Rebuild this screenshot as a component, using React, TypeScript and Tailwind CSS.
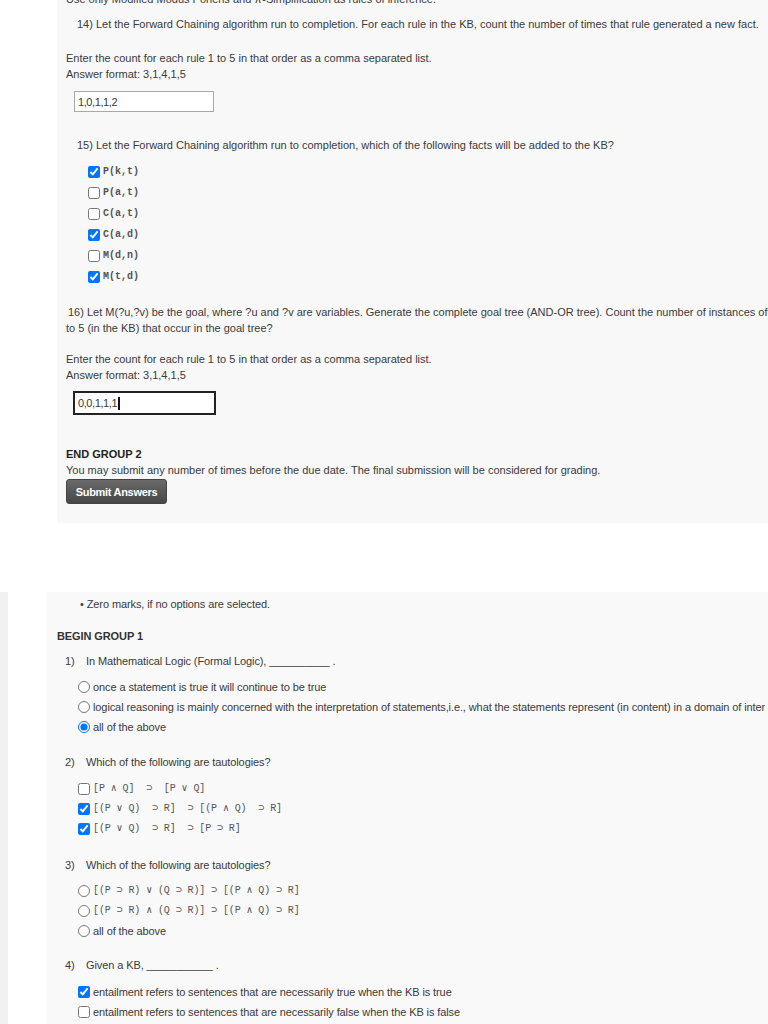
import React from "react";

const sans = "font-['Liberation_Sans',Arial,sans-serif]";
const mono = "font-['Liberation_Mono','Courier_New',monospace]";

function Box({ checked }: { checked?: boolean }) {
  return (
    <input
      type="checkbox"
      readOnly
      checked={!!checked}
      className="m-0 h-[12px] w-[12px] shrink-0"
    />
  );
}

function Radio({ checked }: { checked?: boolean }) {
  return (
    <input
      type="radio"
      readOnly
      checked={!!checked}
      className="m-0 h-[12px] w-[12px] shrink-0"
    />
  );
}

function AnswerBox({ value, focused }: { value: string; focused?: boolean }) {
  if (focused) {
    return (
      <div className="mt-[8px] ml-[7px] flex h-[24px] w-[143px] items-center border-2 border-[#222] bg-white pl-[3px] text-[11px] tracking-[-0.4px]">
        {value}
        <span className="ml-[1px] h-[13px] w-[2px] bg-[#111]" />
      </div>
    );
  }
  return (
    <div className="mt-[9px] ml-[8px] flex h-[21px] w-[140px] items-center border border-[#a9a9a9] bg-white pl-[3px] text-[11px] tracking-[-0.4px]">
      {value}
    </div>
  );
}

const facts = [
  { t: "P(k,t)", c: true },
  { t: "P(a,t)", c: false },
  { t: "C(a,t)", c: false },
  { t: "C(a,d)", c: true },
  { t: "M(d,n)", c: false },
  { t: "M(t,d)", c: true },
];

function TopPanel() {
  return (
    <div className="h-[592px] pl-[57px]">
      <div className="h-[523px] overflow-hidden bg-[#f8f8f8] pl-[9px] text-[11px] leading-4 text-[#3a3a3a]">
        <p className="-mt-[9px] whitespace-nowrap">
          Use only Modified Modus Ponens and ∧-Simplification as rules of inference.
        </p>
        <p className="mt-[9px] ml-[11px] whitespace-nowrap">
          14) Let the Forward Chaining algorithm run to completion. For each rule in the KB, count the number of times that rule generated a new fact.
        </p>
        <p className="mt-[18px]">Enter the count for each rule 1 to 5 in that order as a comma separated list.</p>
        <p>Answer format: 3,1,4,1,5</p>
        <AnswerBox value="1,0,1,1,2" />

        <p className="mt-[25px] ml-[11px] whitespace-nowrap">
          15) Let the Forward Chaining algorithm run to completion, which of the following facts will be added to the KB?
        </p>
        <div className="mt-[8px] ml-[22px]">
          {facts.map((f) => (
            <div key={f.t} className="flex h-[21px] items-center gap-[3px]">
              <Box checked={f.c} />
              <span className={`${mono} text-[10px] font-bold text-[#555]`}>{f.t}</span>
            </div>
          ))}
        </div>

        <p className="mt-[17px] ml-[2px] whitespace-nowrap">
          16) Let M(?u,?v) be the goal, where ?u and ?v are variables. Generate the complete goal tree (AND-OR tree). Count the number of instances of
        </p>
        <p>to 5 (in the KB) that occur in the goal tree?</p>
        <p className="mt-[15px]">Enter the count for each rule 1 to 5 in that order as a comma separated list.</p>
        <p>Answer format: 3,1,4,1,5</p>
        <AnswerBox value="0,0,1,1,1" focused />

        <p className="mt-[31px] font-bold text-[#222]">END GROUP 2</p>
        <p>You may submit any number of times before the due date. The final submission will be considered for grading.</p>
        <button className="mt-[1px] h-[25px] w-[101px] rounded-[3px] border border-[#444] bg-gradient-to-b from-[#6a6a6a] to-[#474747] text-[11px] font-bold tracking-[-0.3px] text-white">
          Submit Answers
        </button>
      </div>
    </div>
  );
}

function Question({ n, text, className }: { n: string; text: string; className?: string }) {
  return (
    <div className={`ml-[8px] flex whitespace-nowrap ${className ?? ""}`}>
      <span className="w-[21px]">{n}</span>
      <span>{text}</span>
    </div>
  );
}

function Option({ kind, checked, children, formula }: { kind: "radio" | "box"; checked?: boolean; children?: React.ReactNode; formula?: boolean }) {
  return (
    <div className="flex h-[20px] items-center gap-[3px] whitespace-nowrap">
      {kind === "radio" ? <Radio checked={checked} /> : <Box checked={checked} />}
      {formula ? (
        <span className={`${mono} whitespace-pre text-[10px] text-[#555]`}>{children}</span>
      ) : (
        <span>{children}</span>
      )}
    </div>
  );
}

function BottomPanel() {
  return (
    <div className="flex h-[432px]">
      <div className="w-[8px] bg-[#f1f1f1]" />
      <div className="w-[39px] bg-white" />
      <div className="flex-1 overflow-hidden bg-[#f9f9f9] pl-[10px] text-[11px] leading-4 tracking-[-0.1px] text-[#3a3a3a]">
        <p className="mt-[4px] ml-[23px] whitespace-nowrap">• Zero marks, if no options are selected.</p>
        <p className="mt-[16px] font-bold text-[#333]">BEGIN GROUP 1</p>

        <Question className="mt-[9px]" n="1)" text="In Mathematical Logic (Formal Logic), __________ ." />
        <div className="mt-[8px] ml-[21px]">
          <Option kind="radio">once a statement is true it will continue to be true</Option>
          <Option kind="radio">
            logical reasoning is mainly concerned with the interpretation of statements,i.e., what the statements represent (in content) in a domain of inter
          </Option>
          <Option kind="radio" checked>all of the above</Option>
        </div>

        <Question className="mt-[17px]" n="2)" text="Which of the following are tautologies?" />
        <div className="mt-[9px] ml-[21px]">
          <Option kind="box" formula>{"[P ∧ Q]  ⊃  [P ∨ Q]"}</Option>
          <Option kind="box" checked formula>{"[(P ∨ Q)  ⊃ R]  ⊃ [(P ∧ Q)  ⊃ R]"}</Option>
          <Option kind="box" checked formula>{"[(P ∨ Q)  ⊃ R]  ⊃ [P ⊃ R]"}</Option>
        </div>

        <Question className="mt-[18px]" n="3)" text="Which of the following are tautologies?" />
        <div className="mt-[8px] ml-[21px]">
          <Option kind="radio" formula>{"[(P ⊃ R) ∨ (Q ⊃ R)] ⊃ [(P ∧ Q) ⊃ R]"}</Option>
          <Option kind="radio" formula>{"[(P ⊃ R) ∧ (Q ⊃ R)] ⊃ [(P ∧ Q) ⊃ R]"}</Option>
          <Option kind="radio">all of the above</Option>
        </div>

        <Question className="mt-[16px]" n="4)" text="Given a KB, ___________ ." />
        <div className="mt-[9px] ml-[21px]">
          <Option kind="box" checked>entailment refers to sentences that are necessarily true when the KB is true</Option>
          <Option kind="box">entailment refers to sentences that are necessarily false when the KB is false</Option>
          <Option kind="box" />
        </div>
      </div>
    </div>
  );
}

export default function App() {
  return (
    <div className={`h-[1024px] w-[768px] overflow-hidden bg-white ${sans}`}>
      <TopPanel />
      <BottomPanel />
    </div>
  );
}
